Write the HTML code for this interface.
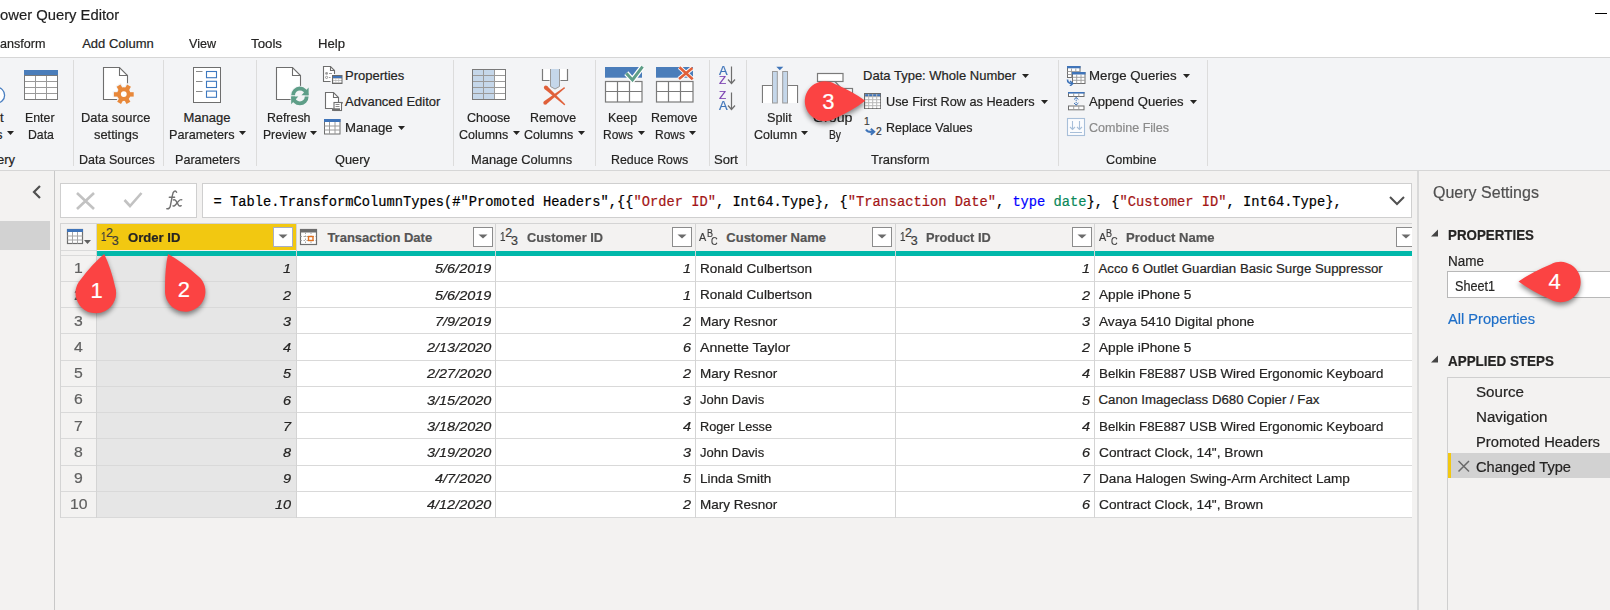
<!DOCTYPE html><html><head><meta charset="utf-8"><style>
html,body{margin:0;padding:0;width:1610px;height:610px;overflow:hidden;background:#f3f2f1;position:relative}
.t{position:absolute;white-space:pre;-webkit-text-stroke:0.2px currentColor;}
.r{position:absolute;}
</style></head><body>
<div class="r" style="left:0px;top:0px;width:1610px;height:57px;background:#ffffff;"></div>
<div class="r" style="left:0px;top:57px;width:1610px;height:1px;background:#d6d6d6;"></div>
<div class="r" style="left:0px;top:58px;width:1610px;height:112px;background:#f3f4f6;"></div>
<div class="r" style="left:0px;top:170px;width:1610px;height:1px;background:#d6d6d6;"></div>
<div class="r" style="left:0px;top:171px;width:1610px;height:439px;background:#f3f2f1;"></div>
<div class="t" style="left:-0.30px;top:7.30px;font-size:15px;line-height:15px;color:#1f1f1f;font-family:'Liberation Sans', sans-serif;transform:scaleX(0.9862);transform-origin:0 0;">ower Query Editor</div>
<div class="r" style="left:1595px;top:13px;width:12px;height:1px;background:#000;"></div>
<div class="t" style="left:0.00px;top:37.00px;font-size:13px;line-height:13px;color:#252423;font-family:'Liberation Sans', sans-serif;transform:scaleX(0.9690);transform-origin:0 0;">ansform</div>
<div class="t" style="left:82.20px;top:37.00px;font-size:13px;line-height:13px;color:#252423;font-family:'Liberation Sans', sans-serif;">Add Column</div>
<div class="t" style="left:188.60px;top:37.00px;font-size:13px;line-height:13px;color:#252423;font-family:'Liberation Sans', sans-serif;transform:scaleX(0.9663);transform-origin:0 0;">View</div>
<div class="t" style="left:250.60px;top:37.00px;font-size:13px;line-height:13px;color:#252423;font-family:'Liberation Sans', sans-serif;transform:scaleX(1.0215);transform-origin:0 0;">Tools</div>
<div class="t" style="left:317.60px;top:37.00px;font-size:13px;line-height:13px;color:#252423;font-family:'Liberation Sans', sans-serif;transform:scaleX(1.0099);transform-origin:0 0;">Help</div>
<div class="r" style="left:73px;top:60px;width:1px;height:106px;background:#dcdcdc;"></div>
<div class="r" style="left:163px;top:60px;width:1px;height:106px;background:#dcdcdc;"></div>
<div class="r" style="left:256px;top:60px;width:1px;height:106px;background:#dcdcdc;"></div>
<div class="r" style="left:453px;top:60px;width:1px;height:106px;background:#dcdcdc;"></div>
<div class="r" style="left:595px;top:60px;width:1px;height:106px;background:#dcdcdc;"></div>
<div class="r" style="left:709px;top:60px;width:1px;height:106px;background:#dcdcdc;"></div>
<div class="r" style="left:746px;top:60px;width:1px;height:106px;background:#dcdcdc;"></div>
<div class="r" style="left:1058px;top:60px;width:1px;height:106px;background:#dcdcdc;"></div>
<div class="r" style="left:1207px;top:60px;width:1px;height:106px;background:#dcdcdc;"></div>
<svg class="r" style="left:0px;top:86px;" width="8" height="18" viewBox="0 0 8 18"><circle cx="-3.3" cy="9.2" r="7.9" fill="#fff" stroke="#4a7fc1" stroke-width="1.3"/></svg>
<div class="t" style="left:-0.01px;top:111.00px;font-size:13px;line-height:13px;color:#252423;font-family:'Liberation Sans', sans-serif;">t</div>
<div class="t" style="left:-3.90px;top:128.00px;font-size:13px;line-height:13px;color:#252423;font-family:'Liberation Sans', sans-serif;">s</div>
<svg class="r" style="left:7px;top:131px;" width="7" height="4" viewBox="0 0 7 4"><path d="M0 0 H7 L3.5 4 Z" fill="#252423"/></svg>
<div class="t" style="left:-3.06px;top:153.00px;font-size:13px;line-height:13px;color:#252423;font-family:'Liberation Sans', sans-serif;">ery</div>
<svg class="r" style="left:23px;top:69px;" width="36" height="32" viewBox="0 0 36 32"><rect x="1.5" y="1.5" width="33" height="29" fill="#fff" stroke="#7a7a7a" stroke-width="1"/><rect x="1" y="1" width="34" height="5.8" fill="#4a7dba"/><path d="M12.5 6.8 V30.5 M23.5 6.8 V30.5 M1.5 12.5 H34.5 M1.5 18.5 H34.5 M1.5 24.5 H34.5" stroke="#9a9a9a" stroke-width="1"/><rect x="1.5" y="6.5" width="33" height="24" fill="none" stroke="#7a7a7a" stroke-width="1"/></svg>
<div class="t" style="left:25.20px;top:111.00px;font-size:13px;line-height:13px;color:#252423;font-family:'Liberation Sans', sans-serif;transform:scaleX(0.9495);transform-origin:0 0;">Enter</div>
<div class="t" style="left:27.60px;top:128.00px;font-size:13px;line-height:13px;color:#252423;font-family:'Liberation Sans', sans-serif;transform:scaleX(0.9432);transform-origin:0 0;">Data</div>
<svg class="r" style="left:101px;top:66px;" width="36" height="38" viewBox="0 0 36 38"><path d="M2.5 1.5 H18.5 L26.5 9.5 V33.5 H2.5 Z" fill="#fff" stroke="#6e6e6e" stroke-width="1.1"/><path d="M18.5 1.5 V9.5 H26.5" fill="none" stroke="#6e6e6e" stroke-width="1.1"/><g transform="translate(22.8 28.1)"><rect x="-3.2" y="-11.2" width="6.4" height="22.4" fill="#f3f4f6" transform="rotate(30)"/><rect x="-3.2" y="-11.2" width="6.4" height="22.4" fill="#f3f4f6" transform="rotate(90)"/><rect x="-3.2" y="-11.2" width="6.4" height="22.4" fill="#f3f4f6" transform="rotate(150)"/><circle r="7.8" fill="#f3f4f6"/></g><g transform="translate(22.8 28.1)"><rect x="-1.9" y="-9.9" width="4.4" height="19.8" fill="#e8883a" transform="rotate(30)"/><rect x="-1.9" y="-9.9" width="4.4" height="19.8" fill="#e8883a" transform="rotate(90)"/><rect x="-1.9" y="-9.9" width="4.4" height="19.8" fill="#e8883a" transform="rotate(150)"/><circle r="6.8" fill="#e8883a"/><circle r="2.9" fill="#fff"/></g></svg>
<div class="t" style="left:81.30px;top:111.00px;font-size:13px;line-height:13px;color:#252423;font-family:'Liberation Sans', sans-serif;transform:scaleX(0.9888);transform-origin:0 0;">Data source</div>
<div class="t" style="left:93.50px;top:128.00px;font-size:13px;line-height:13px;color:#252423;font-family:'Liberation Sans', sans-serif;transform:scaleX(0.9889);transform-origin:0 0;">settings</div>
<div class="t" style="left:78.70px;top:153.00px;font-size:13px;line-height:13px;color:#252423;font-family:'Liberation Sans', sans-serif;transform:scaleX(0.9624);transform-origin:0 0;">Data Sources</div>
<svg class="r" style="left:192px;top:66px;" width="31" height="38" viewBox="0 0 31 38"><rect x="1.5" y="1.5" width="27" height="35" fill="#fff" stroke="#6e6e6e" stroke-width="1"/><path d="M4 5.5 H10.5 M4 15.5 H10.5 M4 25.5 H10.5" stroke="#8a8a8a" stroke-width="1"/><rect x="14.5" y="5.5" width="10" height="6.2" fill="#fff" stroke="#3c78c0" stroke-width="1.1"/><rect x="14.5" y="15.3" width="10" height="6.2" fill="#fff" stroke="#3c78c0" stroke-width="1.1"/><rect x="14.5" y="25.1" width="10" height="6.2" fill="#fff" stroke="#3c78c0" stroke-width="1.1"/></svg>
<div class="t" style="left:183.50px;top:111.00px;font-size:13px;line-height:13px;color:#252423;font-family:'Liberation Sans', sans-serif;">Manage</div>
<div class="t" style="left:169.10px;top:128.00px;font-size:13px;line-height:13px;color:#252423;font-family:'Liberation Sans', sans-serif;transform:scaleX(0.9749);transform-origin:0 0;">Parameters</div>
<svg class="r" style="left:239px;top:131px;" width="7" height="4" viewBox="0 0 7 4"><path d="M0 0 H7 L3.5 4 Z" fill="#252423"/></svg>
<div class="t" style="left:174.60px;top:153.00px;font-size:13px;line-height:13px;color:#252423;font-family:'Liberation Sans', sans-serif;transform:scaleX(0.9675);transform-origin:0 0;">Parameters</div>
<svg class="r" style="left:274px;top:66px;" width="40" height="40" viewBox="0 0 40 40"><path d="M2.5 1.5 H18.5 L26.5 9.5 V33.5 H2.5 Z" fill="#fff" stroke="#6e6e6e" stroke-width="1.1"/><path d="M18.5 1.5 V9.5 H26.5" fill="none" stroke="#6e6e6e" stroke-width="1.1"/><circle cx="25.9" cy="29.85" r="10" fill="#f3f4f6"/><g fill="none" stroke="#5e9e88" stroke-width="3.8"><path d="M19.1 29.3 A6.8 6.8 0 0 1 32.7 29.3"/><path d="M32.7 30.5 A6.8 6.8 0 0 1 19.1 30.5"/></g><path d="M27.5 29.3 H34.6 V21.4 Z" fill="#5e9e88"/><path d="M24.3 30.5 H17.2 V38.3 Z" fill="#5e9e88"/></svg>
<div class="t" style="left:267.20px;top:111.00px;font-size:13px;line-height:13px;color:#252423;font-family:'Liberation Sans', sans-serif;transform:scaleX(0.9557);transform-origin:0 0;">Refresh</div>
<div class="t" style="left:262.50px;top:128.00px;font-size:13px;line-height:13px;color:#252423;font-family:'Liberation Sans', sans-serif;transform:scaleX(0.9344);transform-origin:0 0;">Preview</div>
<svg class="r" style="left:310px;top:131px;" width="7" height="4" viewBox="0 0 7 4"><path d="M0 0 H7 L3.5 4 Z" fill="#252423"/></svg>
<svg class="r" style="left:321px;top:64px;" width="24" height="22" viewBox="0 0 24 22"><path d="M9.5 17.5 H2.5 V2.5 H9.5 L13.5 6.5 V10" fill="#fff" stroke="#6e6e6e" stroke-width="1.1"/><path d="M9.5 2.5 V6.5 H13.5" fill="none" stroke="#6e6e6e" stroke-width="1.1"/><circle cx="5.6" cy="9.4" r="1.4" fill="#9a9a9a"/><circle cx="5.6" cy="13.4" r="1.1" fill="#fff" stroke="#8a8a8a" stroke-width="0.9"/><path d="M8 9.5 H11 M8 13.5 H9.5" stroke="#9a9a9a" stroke-width="1"/><rect x="11" y="11" width="10.5" height="9" fill="#6a6a6a"/><rect x="12" y="14" width="8.5" height="5" fill="#b8b8b8"/><rect x="12" y="12" width="8.5" height="2" fill="#3f74b9"/><rect x="12.3" y="14.8" width="2.3" height="1.3" fill="#fff"/><rect x="15.2" y="14.8" width="2.3" height="1.3" fill="#fff"/><rect x="18.1" y="14.8" width="2.3" height="1.3" fill="#fff"/><rect x="12.3" y="16.9" width="2.3" height="1.3" fill="#fff"/><rect x="15.2" y="16.9" width="2.3" height="1.3" fill="#fff"/><rect x="18.1" y="16.9" width="2.3" height="1.3" fill="#fff"/></svg>
<div class="t" style="left:345.00px;top:69.00px;font-size:13px;line-height:13px;color:#252423;font-family:'Liberation Sans', sans-serif;">Properties</div>
<svg class="r" style="left:323px;top:90px;" width="24" height="24" viewBox="0 0 24 24"><path d="M9.5 18.5 H2.5 V2.5 H10.5 L15.5 7.5 V12" fill="#fff" stroke="#6e6e6e" stroke-width="1.1"/><path d="M10.5 2.5 V7.5 H15.5" fill="none" stroke="#6e6e6e" stroke-width="1.1"/><path d="M11.2 12.8 H20" stroke="#6e6e6e" stroke-width="1.2"/><rect x="11" y="12.5" width="7.5" height="8" fill="#fff" stroke="#6e6e6e" stroke-width="1.1"/><rect x="9" y="18.3" width="8" height="2.6" fill="#6e6e6e"/><path d="M12.5 14.5 H16.5 M12.5 16.5 H16.5" stroke="#8a8a8a" stroke-width="1"/></svg>
<div class="t" style="left:345.00px;top:95.00px;font-size:13px;line-height:13px;color:#252423;font-family:'Liberation Sans', sans-serif;">Advanced Editor</div>
<svg class="r" style="left:323px;top:118px;" width="19" height="17" viewBox="0 0 19 17"><rect x="1.5" y="1.5" width="15.5" height="14.5" fill="#fff" stroke="#6e6e6e" stroke-width="1"/><rect x="1" y="1" width="16.5" height="3" fill="#3f74b9"/><path d="M6.5 4 V16 M12 4 V16 M1.5 8 H17 M1.5 12 H17" stroke="#9a9a9a" stroke-width="1"/></svg>
<div class="t" style="left:345.00px;top:121.00px;font-size:13px;line-height:13px;color:#252423;font-family:'Liberation Sans', sans-serif;transform:scaleX(1.0154);transform-origin:0 0;">Manage</div>
<svg class="r" style="left:397.5px;top:126px;" width="7" height="4" viewBox="0 0 7 4"><path d="M0 0 H7 L3.5 4 Z" fill="#252423"/></svg>
<div class="t" style="left:335.20px;top:153.00px;font-size:13px;line-height:13px;color:#252423;font-family:'Liberation Sans', sans-serif;transform:scaleX(0.9831);transform-origin:0 0;">Query</div>
<svg class="r" style="left:471px;top:68px;" width="37" height="33" viewBox="0 0 37 33"><rect x="1.5" y="1.5" width="33" height="30" fill="#fff" stroke="#7a7a7a" stroke-width="1"/><rect x="2" y="2" width="21.5" height="29" fill="#c5d7ea"/><path d="M12.5 1.5 V31.5 M23.5 1.5 V31.5 M1.5 7.5 H34.5 M1.5 13.5 H34.5 M1.5 19.5 H34.5 M1.5 25.5 H34.5" stroke="#9a9a9a" stroke-width="1"/><rect x="1.5" y="1.5" width="33" height="30" fill="none" stroke="#7a7a7a" stroke-width="1"/></svg>
<div class="t" style="left:467.30px;top:111.00px;font-size:13px;line-height:13px;color:#252423;font-family:'Liberation Sans', sans-serif;transform:scaleX(0.9664);transform-origin:0 0;">Choose</div>
<div class="t" style="left:459.40px;top:128.00px;font-size:13px;line-height:13px;color:#252423;font-family:'Liberation Sans', sans-serif;transform:scaleX(0.9611);transform-origin:0 0;">Columns</div>
<svg class="r" style="left:513px;top:131px;" width="7" height="4" viewBox="0 0 7 4"><path d="M0 0 H7 L3.5 4 Z" fill="#252423"/></svg>
<svg class="r" style="left:540px;top:67px;" width="30" height="40" viewBox="0 0 30 40"><rect x="3" y="2" width="7" height="11" fill="#fff"/><rect x="19" y="2" width="8" height="11" fill="#fff"/><path d="M2.5 2 V13.5 H9.5 M20.5 13.5 H27.5 V2" fill="none" stroke="#7a7a7a" stroke-width="1.2"/><path d="M10.5 2 V19.5 L15 22 L19.5 19.5 V2 Z" fill="#c5d7ea"/><path d="M10.5 2 V19.5 L15 22 L19.5 19.5 V2" fill="none" stroke="#9a9a9a" stroke-width="1"/><path d="M4.52 21.90 L24.03 38.12 L24.97 37.08 L7.08 19.10 Z" fill="#e0603a"/><circle cx="5.8" cy="20.5" r="1.9" fill="#e0603a"/><circle cx="24.5" cy="37.6" r="0.7" fill="#e0603a"/><path d="M23.77 20.45 L4.03 34.30 L6.37 37.30 L24.63 21.55 Z" fill="#e0603a"/><circle cx="24.2" cy="21.0" r="0.7" fill="#e0603a"/><circle cx="5.2" cy="35.8" r="1.9" fill="#e0603a"/></svg>
<div class="t" style="left:530.30px;top:111.00px;font-size:13px;line-height:13px;color:#252423;font-family:'Liberation Sans', sans-serif;transform:scaleX(0.9524);transform-origin:0 0;">Remove</div>
<div class="t" style="left:524.40px;top:128.00px;font-size:13px;line-height:13px;color:#252423;font-family:'Liberation Sans', sans-serif;transform:scaleX(0.9611);transform-origin:0 0;">Columns</div>
<svg class="r" style="left:578px;top:131px;" width="7" height="4" viewBox="0 0 7 4"><path d="M0 0 H7 L3.5 4 Z" fill="#252423"/></svg>
<div class="t" style="left:471.30px;top:153.00px;font-size:13px;line-height:13px;color:#252423;font-family:'Liberation Sans', sans-serif;transform:scaleX(0.9924);transform-origin:0 0;">Manage Columns</div>
<svg class="r" style="left:603px;top:64px;" width="42" height="40" viewBox="0 0 42 40"><rect x="2" y="3" width="37" height="10.7" fill="#4a7dba"/><rect x="2.5" y="17.5" width="36.5" height="20.5" fill="#fff" stroke="#7a7a7a" stroke-width="1.2"/><path d="M14.5 17.5 V38 M26.5 17.5 V38 M2.5 27.5 H39" stroke="#7a7a7a" stroke-width="1.2"/><path d="M23.3 9.2 L29.5 16 L39.6 2.7" fill="none" stroke="#fff" stroke-width="5.5"/><path d="M23.3 9.2 L29.5 16 L39.6 2.7" fill="none" stroke="#5e9e88" stroke-width="3"/></svg>
<div class="t" style="left:608.10px;top:111.00px;font-size:13px;line-height:13px;color:#252423;font-family:'Liberation Sans', sans-serif;transform:scaleX(0.9585);transform-origin:0 0;">Keep</div>
<div class="t" style="left:603.40px;top:128.00px;font-size:13px;line-height:13px;color:#252423;font-family:'Liberation Sans', sans-serif;transform:scaleX(0.9198);transform-origin:0 0;">Rows</div>
<svg class="r" style="left:637.5px;top:131px;" width="7" height="4" viewBox="0 0 7 4"><path d="M0 0 H7 L3.5 4 Z" fill="#252423"/></svg>
<svg class="r" style="left:654px;top:64px;" width="42" height="40" viewBox="0 0 42 40"><rect x="2" y="3" width="37" height="10.7" fill="#4a7dba"/><rect x="2.5" y="17.5" width="36.5" height="20.5" fill="#fff" stroke="#7a7a7a" stroke-width="1.2"/><path d="M14.5 17.5 V38 M26.5 17.5 V38 M2.5 27.5 H39" stroke="#7a7a7a" stroke-width="1.2"/><path d="M25.4 3.2 L38.7 15.3 M38.4 4.1 L25 15" fill="none" stroke="#fff" stroke-width="4.5"/><path d="M25.4 3.2 L38.7 15.3 M38.4 4.1 L25 15" fill="none" stroke="#e0603a" stroke-width="2.6"/></svg>
<div class="t" style="left:651.40px;top:111.00px;font-size:13px;line-height:13px;color:#252423;font-family:'Liberation Sans', sans-serif;transform:scaleX(0.9565);transform-origin:0 0;">Remove</div>
<div class="t" style="left:654.60px;top:128.00px;font-size:13px;line-height:13px;color:#252423;font-family:'Liberation Sans', sans-serif;transform:scaleX(0.9198);transform-origin:0 0;">Rows</div>
<svg class="r" style="left:688.5px;top:131px;" width="7" height="4" viewBox="0 0 7 4"><path d="M0 0 H7 L3.5 4 Z" fill="#252423"/></svg>
<div class="t" style="left:611.30px;top:153.00px;font-size:13px;line-height:13px;color:#252423;font-family:'Liberation Sans', sans-serif;transform:scaleX(0.9528);transform-origin:0 0;">Reduce Rows</div>
<svg class="r" style="left:727px;top:66px;" width="9" height="19" viewBox="0 0 9 19"><path d="M4.5 0.5 V17.5 M1 13.5 L4.5 17.5 L8 13.5" fill="none" stroke="#6e6e6e" stroke-width="1.2"/></svg>
<svg class="r" style="left:727px;top:92px;" width="9" height="19" viewBox="0 0 9 19"><path d="M4.5 0.5 V17.5 M1 13.5 L4.5 17.5 L8 13.5" fill="none" stroke="#6e6e6e" stroke-width="1.2"/></svg>
<div class="t" style="left:718.60px;top:64.91px;font-size:12.150837988826815px;line-height:12.150837988826815px;color:#3f74b9;font-family:'Liberation Sans', sans-serif;transform:scaleX(1.0611);transform-origin:0 0;">A</div>
<div class="t" style="left:719.10px;top:74.80px;font-size:10.75418994413408px;line-height:10.75418994413408px;color:#7a3fb0;font-family:'Liberation Sans', sans-serif;transform:scaleX(1.0961);transform-origin:0 0;">Z</div>
<div class="t" style="left:719.10px;top:90.83px;font-size:10.474860335195531px;line-height:10.474860335195531px;color:#7a3fb0;font-family:'Liberation Sans', sans-serif;transform:scaleX(1.1254);transform-origin:0 0;">Z</div>
<div class="t" style="left:718.60px;top:100.11px;font-size:12.150837988826815px;line-height:12.150837988826815px;color:#3f74b9;font-family:'Liberation Sans', sans-serif;transform:scaleX(1.0611);transform-origin:0 0;">A</div>
<div class="t" style="left:714.00px;top:153.00px;font-size:13px;line-height:13px;color:#252423;font-family:'Liberation Sans', sans-serif;transform:scaleX(1.0067);transform-origin:0 0;">Sort</div>
<svg class="r" style="left:760px;top:65px;" width="40" height="40" viewBox="0 0 40 40"><path d="M16.3 1.8 H23.3 L19.8 5.3 Z" fill="#3f74b9"/><path d="M2.5 38 V20.5 H12.5 M27.5 20.5 H37.5 V38" fill="#fff" stroke="#7a7a7a" stroke-width="1.2"/><rect x="3" y="21" width="9.3" height="17" fill="#fff"/><rect x="28" y="21" width="9" height="17" fill="#fff"/><rect x="12.5" y="6.5" width="4.8" height="31.5" fill="#c5d7ea" stroke="#9a9a9a" stroke-width="1"/><rect x="22.7" y="6.5" width="4.8" height="31.5" fill="#c5d7ea" stroke="#9a9a9a" stroke-width="1"/></svg>
<div class="t" style="left:767.20px;top:111.00px;font-size:13px;line-height:13px;color:#252423;font-family:'Liberation Sans', sans-serif;transform:scaleX(0.9767);transform-origin:0 0;">Split</div>
<div class="t" style="left:753.50px;top:128.00px;font-size:13px;line-height:13px;color:#252423;font-family:'Liberation Sans', sans-serif;transform:scaleX(0.9622);transform-origin:0 0;">Column</div>
<svg class="r" style="left:801px;top:131px;" width="7" height="4" viewBox="0 0 7 4"><path d="M0 0 H7 L3.5 4 Z" fill="#252423"/></svg>
<svg class="r" style="left:815px;top:71px;" width="40" height="30" viewBox="0 0 40 30"><rect x="2.5" y="2.5" width="25.5" height="8" fill="#fff" stroke="#7a7a7a" stroke-width="1.2"/><path d="M20 10.5 L26 17" stroke="#7a7a7a" stroke-width="1.2"/><rect x="24.5" y="17.5" width="13" height="8" fill="#fff" stroke="#7a7a7a" stroke-width="1.2"/></svg>
<div class="t" style="left:812.50px;top:111.00px;font-size:13px;line-height:13px;color:#252423;font-family:'Liberation Sans', sans-serif;transform:scaleX(1.0933);transform-origin:0 0;">Group</div>
<div class="t" style="left:829.00px;top:128.00px;font-size:13px;line-height:13px;color:#252423;font-family:'Liberation Sans', sans-serif;transform:scaleX(0.7910);transform-origin:0 0;">By</div>
<div class="t" style="left:863.10px;top:69.00px;font-size:13px;line-height:13px;color:#252423;font-family:'Liberation Sans', sans-serif;">Data Type: Whole Number</div>
<svg class="r" style="left:1021.5px;top:74px;" width="7" height="4" viewBox="0 0 7 4"><path d="M0 0 H7 L3.5 4 Z" fill="#252423"/></svg>
<svg class="r" style="left:863px;top:92px;" width="19" height="18" viewBox="0 0 19 18"><rect x="1" y="1" width="17" height="16" fill="#6a6a6a"/><rect x="2" y="2" width="15" height="14" fill="#b8b8b8"/><rect x="2.2" y="2.2" width="3" height="2" fill="#3f74b9"/><rect x="6.2" y="2.2" width="3" height="2" fill="#3f74b9"/><rect x="10.2" y="2.2" width="3" height="2" fill="#3f74b9"/><rect x="14.2" y="2.2" width="3" height="2" fill="#3f74b9"/><rect x="2.2" y="5.2" width="3" height="2" fill="#ffffff"/><rect x="6.2" y="5.2" width="3" height="2" fill="#ffffff"/><rect x="10.2" y="5.2" width="3" height="2" fill="#ffffff"/><rect x="14.2" y="5.2" width="3" height="2" fill="#ffffff"/><rect x="2.2" y="8.2" width="3" height="2" fill="#ffffff"/><rect x="6.2" y="8.2" width="3" height="2" fill="#ffffff"/><rect x="10.2" y="8.2" width="3" height="2" fill="#ffffff"/><rect x="14.2" y="8.2" width="3" height="2" fill="#ffffff"/><rect x="2.2" y="11.2" width="3" height="2" fill="#ffffff"/><rect x="6.2" y="11.2" width="3" height="2" fill="#ffffff"/><rect x="10.2" y="11.2" width="3" height="2" fill="#ffffff"/><rect x="14.2" y="11.2" width="3" height="2" fill="#ffffff"/><rect x="2.2" y="14.2" width="3" height="2" fill="#ffffff"/><rect x="6.2" y="14.2" width="3" height="2" fill="#ffffff"/><rect x="10.2" y="14.2" width="3" height="2" fill="#ffffff"/><rect x="14.2" y="14.2" width="3" height="2" fill="#ffffff"/></svg>
<div class="t" style="left:886.10px;top:95.00px;font-size:13px;line-height:13px;color:#252423;font-family:'Liberation Sans', sans-serif;transform:scaleX(0.9789);transform-origin:0 0;">Use First Row as Headers</div>
<svg class="r" style="left:1040.5px;top:100px;" width="7" height="4" viewBox="0 0 7 4"><path d="M0 0 H7 L3.5 4 Z" fill="#252423"/></svg>
<div class="t" style="left:864.00px;top:116.98px;font-size:10.3px;line-height:10.3px;color:#3c3c3c;font-family:'Liberation Sans', sans-serif;">1</div>
<div class="t" style="left:876.00px;top:126.98px;font-size:10.3px;line-height:10.3px;color:#3c3c3c;font-family:'Liberation Sans', sans-serif;">2</div>
<svg class="r" style="left:864px;top:124px;" width="14" height="14" viewBox="0 0 14 14"><path d="M2 5.5 Q3.5 8.3 8 7.8 H9" fill="none" stroke="#3f74b9" stroke-width="2"/><path d="M6.8 4.8 L10.2 7.8 L6.8 10.8" fill="none" stroke="#3f74b9" stroke-width="2"/></svg>
<div class="t" style="left:886.10px;top:121.00px;font-size:13px;line-height:13px;color:#252423;font-family:'Liberation Sans', sans-serif;transform:scaleX(0.9602);transform-origin:0 0;">Replace Values</div>
<div class="t" style="left:871.20px;top:153.00px;font-size:13px;line-height:13px;color:#252423;font-family:'Liberation Sans', sans-serif;transform:scaleX(0.9941);transform-origin:0 0;">Transform</div>
<svg class="r" style="left:1065px;top:64px;" width="22" height="22" viewBox="0 0 22 22"><rect x="2.5" y="2.5" width="12.5" height="11" fill="#fff" stroke="#6e6e6e" stroke-width="1"/><rect x="2" y="2" width="13.5" height="2.3" fill="#3f74b9"/><path d="M6.5 4.5 V13.5 M10.8 4.5 V13.5 M2.5 7.5 H15 M2.5 10.5 H15" stroke="#9a9a9a" stroke-width="0.9"/><rect x="7.5" y="8.5" width="12.5" height="11" fill="#fff" stroke="#6e6e6e" stroke-width="1"/><rect x="7" y="8" width="13.5" height="2.5" fill="#3f74b9"/><path d="M11.7 10.5 V19.5 M16 10.5 V19.5 M7.5 13.3 H20 M7.5 16.3 H20" stroke="#9a9a9a" stroke-width="0.9"/><path d="M2.5 15.5 Q2.5 19.5 7 19.5" fill="none" stroke="#3f74b9" stroke-width="1.6"/><path d="M5 17 L7.8 19.5 L5 22" fill="none" stroke="#3f74b9" stroke-width="1.5"/></svg>
<div class="t" style="left:1089.40px;top:69.00px;font-size:13px;line-height:13px;color:#252423;font-family:'Liberation Sans', sans-serif;transform:scaleX(1.0189);transform-origin:0 0;">Merge Queries</div>
<svg class="r" style="left:1182.5px;top:74px;" width="7" height="4" viewBox="0 0 7 4"><path d="M0 0 H7 L3.5 4 Z" fill="#252423"/></svg>
<svg class="r" style="left:1066px;top:90px;" width="20" height="22" viewBox="0 0 20 22"><rect x="2.5" y="2.5" width="15.5" height="4" fill="#fff" stroke="#6e6e6e" stroke-width="1"/><rect x="2" y="2" width="16.5" height="1.6" fill="#3f74b9"/><path d="M7.7 3 V6.5 M12.8 3 V6.5" stroke="#9a9a9a" stroke-width="0.9"/><rect x="2.5" y="16" width="15.5" height="3.8" fill="#fff" stroke="#6e6e6e" stroke-width="1"/><path d="M7.7 16 V19.8 M12.8 16 V19.8" stroke="#9a9a9a" stroke-width="0.9"/><path d="M10.2 7.5 V15" stroke="#3f74b9" stroke-width="1" stroke-dasharray="1.2 1"/><path d="M8 9.5 L10.2 7.5 L12.4 9.5 M8 13 L10.2 15 L12.4 13" fill="none" stroke="#3f74b9" stroke-width="1"/></svg>
<div class="t" style="left:1089.40px;top:95.00px;font-size:13px;line-height:13px;color:#252423;font-family:'Liberation Sans', sans-serif;transform:scaleX(1.0059);transform-origin:0 0;">Append Queries</div>
<svg class="r" style="left:1189.5px;top:100px;" width="7" height="4" viewBox="0 0 7 4"><path d="M0 0 H7 L3.5 4 Z" fill="#252423"/></svg>
<svg class="r" style="left:1066px;top:117px;" width="20" height="20" viewBox="0 0 20 20"><rect x="1.5" y="1.5" width="17" height="17" fill="#fbfcfe" stroke="#a8bfd9" stroke-width="1.1"/><path d="M6.5 4 V12.5 M4 10 L6.5 12.5 L9 10 M13.5 4 V12.5 M11 10 L13.5 12.5 L16 10 M4 15.5 H16" fill="none" stroke="#a8bfd9" stroke-width="1.1"/></svg>
<div class="t" style="left:1089.40px;top:121.00px;font-size:13px;line-height:13px;color:#8a8a8a;font-family:'Liberation Sans', sans-serif;transform:scaleX(0.9641);transform-origin:0 0;">Combine Files</div>
<div class="t" style="left:1105.70px;top:153.00px;font-size:13px;line-height:13px;color:#252423;font-family:'Liberation Sans', sans-serif;transform:scaleX(0.9727);transform-origin:0 0;">Combine</div>
<div class="r" style="left:54px;top:171px;width:1px;height:439px;background:#c8c8c8;"></div>
<div class="r" style="left:0px;top:221px;width:50px;height:29px;background:#d2d2d2;"></div>
<svg class="r" style="left:30px;top:184px;" width="14" height="16" viewBox="0 0 14 16"><path d="M10 2 L4 8 L10 14" fill="none" stroke="#505050" stroke-width="2.2"/></svg>
<div class="r" style="left:1417px;top:171px;width:2px;height:439px;background:#d9d9d9;"></div>
<div class="r" style="left:60px;top:183px;width:137px;height:35px;background:#ffffff;box-sizing:border-box;border:1px solid #cfcfcf;"></div>
<div class="r" style="left:202px;top:183px;width:1210px;height:35px;background:#ffffff;box-sizing:border-box;border:1px solid #cfcfcf;"></div>
<svg class="r" style="left:74px;top:190px;" width="24" height="22" viewBox="0 0 24 22"><path d="M3 3 L20 19 M20 3 L3 19" stroke="#c2c2c2" stroke-width="2.6" fill="none"/></svg>
<svg class="r" style="left:122px;top:190px;" width="22" height="20" viewBox="0 0 22 20"><path d="M2.5 10 L8 16 L19.5 3" stroke="#c2c2c2" stroke-width="2.6" fill="none"/></svg>
<svg class="r" style="left:160px;top:186px;" width="24" height="26" viewBox="0 0 24 26"><g fill="none" stroke="#707070" stroke-width="1.4" stroke-linecap="round"><path d="M16.6 6.3 Q15.8 4.6 14.2 5.3 Q12.9 6.1 12.4 9.3 L10.3 20.2 Q9.4 23.3 6.8 22.7"/><path d="M9.3 11.2 H14.6"/><g transform="translate(1 0.3)"><path d="M12.4 13.6 Q14 12.9 15 14.6 L17.5 18.9 Q18.5 20.4 20.2 19.4"/><path d="M20.8 13.5 Q19.2 12.9 17.6 14.8 L14.6 18.4 Q13.1 20.2 12 19.6"/></g></g></svg>
<div class="t" style="left:213.60px;top:196.48px;font-size:13.72px;line-height:13.72px;color:#000000;font-family:'Liberation Mono', monospace;">= Table.TransformColumnTypes(#"Promoted Headers",{{</div>
<div class="t" style="left:633.58px;top:196.48px;font-size:13.72px;line-height:13.72px;color:#a31515;font-family:'Liberation Mono', monospace;">"Order ID"</div>
<div class="t" style="left:715.93px;top:196.48px;font-size:13.72px;line-height:13.72px;color:#000000;font-family:'Liberation Mono', monospace;">, Int64.Type}, {</div>
<div class="t" style="left:847.69px;top:196.48px;font-size:13.72px;line-height:13.72px;color:#a31515;font-family:'Liberation Mono', monospace;">"Transaction Date"</div>
<div class="t" style="left:995.92px;top:196.48px;font-size:13.72px;line-height:13.72px;color:#000000;font-family:'Liberation Mono', monospace;">, </div>
<div class="t" style="left:1012.39px;top:196.48px;font-size:13.72px;line-height:13.72px;color:#0000ff;font-family:'Liberation Mono', monospace;">type</div>
<div class="t" style="left:1045.34px;top:196.48px;font-size:13.72px;line-height:13.72px;color:#000;font-family:'Liberation Mono', monospace;"> </div>
<div class="t" style="left:1053.57px;top:196.48px;font-size:13.72px;line-height:13.72px;color:#09885a;font-family:'Liberation Mono', monospace;">date</div>
<div class="t" style="left:1086.51px;top:196.48px;font-size:13.72px;line-height:13.72px;color:#000000;font-family:'Liberation Mono', monospace;">}, {</div>
<div class="t" style="left:1119.45px;top:196.48px;font-size:13.72px;line-height:13.72px;color:#a31515;font-family:'Liberation Mono', monospace;">"Customer ID"</div>
<div class="t" style="left:1226.51px;top:196.48px;font-size:13.72px;line-height:13.72px;color:#000000;font-family:'Liberation Mono', monospace;">, Int64.Type},</div>
<svg class="r" style="left:1388px;top:193px;" width="18" height="14" viewBox="0 0 18 14"><path d="M2 4 L9 11 L16 4" fill="none" stroke="#505050" stroke-width="2"/></svg>
<div class="r" style="left:60px;top:223px;width:1352px;height:28px;background:#f3f2f1;"></div>
<div class="r" style="left:60px;top:223px;width:1352px;height:1px;background:#d4d4d4;"></div>
<div class="r" style="left:60px;top:223px;width:1px;height:295px;background:#d4d4d4;"></div>
<div class="r" style="left:97px;top:224px;width:199px;height:26px;background:#f2c811;"></div>
<div class="r" style="left:97px;top:251px;width:1315px;height:5px;background:#01b8aa;"></div>
<div class="r" style="left:61px;top:250px;width:35px;height:1px;background:#dadada;"></div>
<div class="r" style="left:61px;top:256px;width:35px;height:262px;background:#f3f2f1;"></div>
<div class="r" style="left:97px;top:256px;width:199px;height:262px;background:#e6e6e6;"></div>
<div class="r" style="left:297px;top:256px;width:1115px;height:262px;background:#ffffff;"></div>
<div class="r" style="left:61px;top:281px;width:1351px;height:1px;background:#d9d9d9;"></div>
<div class="r" style="left:61px;top:307px;width:1351px;height:1px;background:#d9d9d9;"></div>
<div class="r" style="left:61px;top:333px;width:1351px;height:1px;background:#d9d9d9;"></div>
<div class="r" style="left:61px;top:360px;width:1351px;height:1px;background:#d9d9d9;"></div>
<div class="r" style="left:61px;top:386px;width:1351px;height:1px;background:#d9d9d9;"></div>
<div class="r" style="left:61px;top:412px;width:1351px;height:1px;background:#d9d9d9;"></div>
<div class="r" style="left:61px;top:438px;width:1351px;height:1px;background:#d9d9d9;"></div>
<div class="r" style="left:61px;top:465px;width:1351px;height:1px;background:#d9d9d9;"></div>
<div class="r" style="left:61px;top:491px;width:1351px;height:1px;background:#d9d9d9;"></div>
<div class="r" style="left:61px;top:517px;width:1351px;height:1px;background:#d9d9d9;"></div>
<div class="r" style="left:61px;top:255px;width:35px;height:1px;background:#dadada;"></div>
<div class="r" style="left:96px;top:223px;width:1px;height:295px;background:#d4d4d4;"></div>
<div class="r" style="left:296px;top:224px;width:1px;height:294px;background:#d4d4d4;"></div>
<div class="r" style="left:495px;top:224px;width:1px;height:294px;background:#d4d4d4;"></div>
<div class="r" style="left:695px;top:224px;width:1px;height:294px;background:#d4d4d4;"></div>
<div class="r" style="left:895px;top:224px;width:1px;height:294px;background:#d4d4d4;"></div>
<div class="r" style="left:1094px;top:224px;width:1px;height:294px;background:#d4d4d4;"></div>
<svg class="r" style="left:66px;top:228px;" width="26" height="18" viewBox="0 0 26 18"><rect x="1.5" y="1.5" width="15" height="14" fill="#fff" stroke="#6e6e6e" stroke-width="1.2"/><rect x="1" y="1" width="16" height="3" fill="#3f74b9"/><path d="M6.5 4 V15.5 M11.5 4 V15.5 M1.5 8 H16.5 M1.5 12 H16.5" stroke="#a6a6a6" stroke-width="1"/><path d="M18 12 H25 L21.5 16 Z" fill="#606060"/></svg>
<div class="t" style="left:100.80px;top:231.42px;font-size:12.5px;line-height:12.5px;color:#3d3d3d;font-family:'Liberation Sans', sans-serif;transform:scaleX(0.7912);transform-origin:0 0;">1</div>
<div class="t" style="left:106.10px;top:227.22px;font-size:12.5px;line-height:12.5px;color:#3d3d3d;font-family:'Liberation Sans', sans-serif;">2</div>
<div class="t" style="left:111.80px;top:234.62px;font-size:12.5px;line-height:12.5px;color:#3d3d3d;font-family:'Liberation Sans', sans-serif;">3</div>
<div class="t" style="left:500.00px;top:231.42px;font-size:12.5px;line-height:12.5px;color:#3d3d3d;font-family:'Liberation Sans', sans-serif;transform:scaleX(0.7912);transform-origin:0 0;">1</div>
<div class="t" style="left:505.30px;top:227.22px;font-size:12.5px;line-height:12.5px;color:#3d3d3d;font-family:'Liberation Sans', sans-serif;">2</div>
<div class="t" style="left:511.00px;top:234.62px;font-size:12.5px;line-height:12.5px;color:#3d3d3d;font-family:'Liberation Sans', sans-serif;">3</div>
<div class="t" style="left:899.70px;top:231.42px;font-size:12.5px;line-height:12.5px;color:#3d3d3d;font-family:'Liberation Sans', sans-serif;transform:scaleX(0.7912);transform-origin:0 0;">1</div>
<div class="t" style="left:905.00px;top:227.22px;font-size:12.5px;line-height:12.5px;color:#3d3d3d;font-family:'Liberation Sans', sans-serif;">2</div>
<div class="t" style="left:910.70px;top:234.62px;font-size:12.5px;line-height:12.5px;color:#3d3d3d;font-family:'Liberation Sans', sans-serif;">3</div>
<div class="t" style="left:699.00px;top:231.72px;font-size:11.2px;line-height:11.2px;color:#3d3d3d;font-family:'Liberation Sans', sans-serif;transform:scaleX(0.9638);transform-origin:0 0;">A</div>
<div class="t" style="left:706.60px;top:227.59px;font-size:11px;line-height:11px;color:#3d3d3d;font-family:'Liberation Sans', sans-serif;transform:scaleX(0.8177);transform-origin:0 0;">B</div>
<div class="t" style="left:710.90px;top:235.69px;font-size:11px;line-height:11px;color:#3d3d3d;font-family:'Liberation Sans', sans-serif;transform:scaleX(0.8308);transform-origin:0 0;">C</div>
<div class="t" style="left:1098.60px;top:231.72px;font-size:11.2px;line-height:11.2px;color:#3d3d3d;font-family:'Liberation Sans', sans-serif;transform:scaleX(0.9638);transform-origin:0 0;">A</div>
<div class="t" style="left:1106.20px;top:227.59px;font-size:11px;line-height:11px;color:#3d3d3d;font-family:'Liberation Sans', sans-serif;transform:scaleX(0.8177);transform-origin:0 0;">B</div>
<div class="t" style="left:1110.50px;top:235.69px;font-size:11px;line-height:11px;color:#3d3d3d;font-family:'Liberation Sans', sans-serif;transform:scaleX(0.8308);transform-origin:0 0;">C</div>
<svg class="r" style="left:299px;top:228px;" width="20" height="18" viewBox="0 0 20 18"><rect x="1.5" y="1.5" width="16" height="15" fill="#fff" stroke="#6e6e6e" stroke-width="1.2"/><rect x="1" y="1" width="17" height="3.5" fill="#6e6e6e"/><path d="M6.5 4.5 V16 M12 4.5 V16 M1.5 8.5 H17 M1.5 12.5 H17" stroke="#a6a6a6" stroke-width="1" stroke-dasharray="1.5 1.5"/><rect x="9.5" y="8.5" width="4.5" height="4" fill="#fff" stroke="#e07020" stroke-width="1.4"/></svg>
<div class="r" style="left:273px;top:227px;width:20px;height:20px;background:#ffffff;box-sizing:border-box;border:1px solid #a8aec4;"></div>
<svg class="r" style="left:278px;top:234px;" width="10" height="5" viewBox="0 0 10 5"><path d="M0.5 0.5 H9.5 L5 4.5 Z" fill="#6b6b6b"/></svg>
<div class="r" style="left:473px;top:227px;width:20px;height:20px;background:#ffffff;box-sizing:border-box;border:1px solid #8c8c8c;"></div>
<svg class="r" style="left:478px;top:234px;" width="10" height="5" viewBox="0 0 10 5"><path d="M0.5 0.5 H9.5 L5 4.5 Z" fill="#6b6b6b"/></svg>
<div class="r" style="left:672px;top:227px;width:20px;height:20px;background:#ffffff;box-sizing:border-box;border:1px solid #8c8c8c;"></div>
<svg class="r" style="left:677px;top:234px;" width="10" height="5" viewBox="0 0 10 5"><path d="M0.5 0.5 H9.5 L5 4.5 Z" fill="#6b6b6b"/></svg>
<div class="r" style="left:872px;top:227px;width:20px;height:20px;background:#ffffff;box-sizing:border-box;border:1px solid #8c8c8c;"></div>
<svg class="r" style="left:877px;top:234px;" width="10" height="5" viewBox="0 0 10 5"><path d="M0.5 0.5 H9.5 L5 4.5 Z" fill="#6b6b6b"/></svg>
<div class="r" style="left:1072px;top:227px;width:20px;height:20px;background:#ffffff;box-sizing:border-box;border:1px solid #8c8c8c;"></div>
<svg class="r" style="left:1077px;top:234px;" width="10" height="5" viewBox="0 0 10 5"><path d="M0.5 0.5 H9.5 L5 4.5 Z" fill="#6b6b6b"/></svg>
<div class="r" style="left:1396px;top:227px;width:16px;height:20px;background:#ffffff;box-sizing:border-box;border:1px solid #8c8c8c;border-right:none;"></div>
<svg class="r" style="left:1401px;top:234px;" width="10" height="5" viewBox="0 0 10 5"><path d="M0.5 0.5 H9.5 L5 4.5 Z" fill="#6b6b6b"/></svg>
<div class="t" style="left:127.70px;top:231.00px;font-size:13px;line-height:13px;color:#252423;font-family:'Liberation Sans', sans-serif;font-weight:700;transform:scaleX(1.0075);transform-origin:0 0;">Order ID</div>
<div class="t" style="left:327.40px;top:231.00px;font-size:13px;line-height:13px;color:#555555;font-family:'Liberation Sans', sans-serif;font-weight:700;">Transaction Date</div>
<div class="t" style="left:526.90px;top:231.00px;font-size:13px;line-height:13px;color:#555555;font-family:'Liberation Sans', sans-serif;font-weight:700;transform:scaleX(0.9833);transform-origin:0 0;">Customer ID</div>
<div class="t" style="left:726.30px;top:231.00px;font-size:13px;line-height:13px;color:#555555;font-family:'Liberation Sans', sans-serif;font-weight:700;">Customer Name</div>
<div class="t" style="left:926.00px;top:231.00px;font-size:13px;line-height:13px;color:#555555;font-family:'Liberation Sans', sans-serif;font-weight:700;transform:scaleX(0.9845);transform-origin:0 0;">Product ID</div>
<div class="t" style="left:1126.00px;top:231.00px;font-size:13px;line-height:13px;color:#555555;font-family:'Liberation Sans', sans-serif;font-weight:700;transform:scaleX(1.0054);transform-origin:0 0;">Product Name</div>
<div class="t" style="left:73.91px;top:261.34px;font-size:14.6px;line-height:14.6px;color:#606060;font-family:'Liberation Sans', sans-serif;transform:scaleX(1.0808);transform-origin:0 0;">1</div>
<div class="t" style="left:283.25px;top:262.40px;font-size:13px;line-height:13px;color:#252423;font-family:'Liberation Sans', sans-serif;font-style:italic;transform:scaleX(1.1138);transform-origin:0 0;">1</div>
<div class="t" style="left:434.85px;top:262.40px;font-size:13px;line-height:13px;color:#252423;font-family:'Liberation Sans', sans-serif;font-style:italic;transform:scaleX(1.1136);transform-origin:0 0;">5/6/2019</div>
<div class="t" style="left:682.55px;top:262.40px;font-size:13px;line-height:13px;color:#252423;font-family:'Liberation Sans', sans-serif;font-style:italic;transform:scaleX(1.1138);transform-origin:0 0;">1</div>
<div class="t" style="left:699.80px;top:262.23px;font-size:13.2px;line-height:13.2px;color:#252423;font-family:'Liberation Sans', sans-serif;transform:scaleX(1.0254);transform-origin:0 0;">Ronald Culbertson</div>
<div class="t" style="left:1082.45px;top:262.40px;font-size:13px;line-height:13px;color:#252423;font-family:'Liberation Sans', sans-serif;font-style:italic;transform:scaleX(1.1138);transform-origin:0 0;">1</div>
<div class="t" style="left:1098.50px;top:262.18px;font-size:13.25px;line-height:13.25px;color:#252423;font-family:'Liberation Sans', sans-serif;">Acco 6 Outlet Guardian Basic Surge Suppressor</div>
<div class="t" style="left:73.91px;top:287.56px;font-size:14.6px;line-height:14.6px;color:#606060;font-family:'Liberation Sans', sans-serif;transform:scaleX(1.0808);transform-origin:0 0;">2</div>
<div class="t" style="left:283.25px;top:288.62px;font-size:13px;line-height:13px;color:#252423;font-family:'Liberation Sans', sans-serif;font-style:italic;transform:scaleX(1.1138);transform-origin:0 0;">2</div>
<div class="t" style="left:434.85px;top:288.62px;font-size:13px;line-height:13px;color:#252423;font-family:'Liberation Sans', sans-serif;font-style:italic;transform:scaleX(1.1136);transform-origin:0 0;">5/6/2019</div>
<div class="t" style="left:682.55px;top:288.62px;font-size:13px;line-height:13px;color:#252423;font-family:'Liberation Sans', sans-serif;font-style:italic;transform:scaleX(1.1138);transform-origin:0 0;">1</div>
<div class="t" style="left:699.80px;top:288.45px;font-size:13.2px;line-height:13.2px;color:#252423;font-family:'Liberation Sans', sans-serif;transform:scaleX(1.0254);transform-origin:0 0;">Ronald Culbertson</div>
<div class="t" style="left:1082.45px;top:288.62px;font-size:13px;line-height:13px;color:#252423;font-family:'Liberation Sans', sans-serif;font-style:italic;transform:scaleX(1.1138);transform-origin:0 0;">2</div>
<div class="t" style="left:1098.50px;top:288.40px;font-size:13.25px;line-height:13.25px;color:#252423;font-family:'Liberation Sans', sans-serif;transform:scaleX(1.0281);transform-origin:0 0;">Apple iPhone 5</div>
<div class="t" style="left:73.91px;top:313.78px;font-size:14.6px;line-height:14.6px;color:#606060;font-family:'Liberation Sans', sans-serif;transform:scaleX(1.0808);transform-origin:0 0;">3</div>
<div class="t" style="left:283.25px;top:314.84px;font-size:13px;line-height:13px;color:#252423;font-family:'Liberation Sans', sans-serif;font-style:italic;transform:scaleX(1.1138);transform-origin:0 0;">3</div>
<div class="t" style="left:434.85px;top:314.84px;font-size:13px;line-height:13px;color:#252423;font-family:'Liberation Sans', sans-serif;font-style:italic;transform:scaleX(1.1136);transform-origin:0 0;">7/9/2019</div>
<div class="t" style="left:682.55px;top:314.84px;font-size:13px;line-height:13px;color:#252423;font-family:'Liberation Sans', sans-serif;font-style:italic;transform:scaleX(1.1138);transform-origin:0 0;">2</div>
<div class="t" style="left:699.80px;top:314.67px;font-size:13.2px;line-height:13.2px;color:#252423;font-family:'Liberation Sans', sans-serif;transform:scaleX(1.0232);transform-origin:0 0;">Mary Resnor</div>
<div class="t" style="left:1082.45px;top:314.84px;font-size:13px;line-height:13px;color:#252423;font-family:'Liberation Sans', sans-serif;font-style:italic;transform:scaleX(1.1138);transform-origin:0 0;">3</div>
<div class="t" style="left:1098.50px;top:314.62px;font-size:13.25px;line-height:13.25px;color:#252423;font-family:'Liberation Sans', sans-serif;transform:scaleX(1.0308);transform-origin:0 0;">Avaya 5410 Digital phone</div>
<div class="t" style="left:73.91px;top:340.00px;font-size:14.6px;line-height:14.6px;color:#606060;font-family:'Liberation Sans', sans-serif;transform:scaleX(1.0808);transform-origin:0 0;">4</div>
<div class="t" style="left:283.25px;top:341.06px;font-size:13px;line-height:13px;color:#252423;font-family:'Liberation Sans', sans-serif;font-style:italic;transform:scaleX(1.1138);transform-origin:0 0;">4</div>
<div class="t" style="left:426.80px;top:341.06px;font-size:13px;line-height:13px;color:#252423;font-family:'Liberation Sans', sans-serif;font-style:italic;transform:scaleX(1.1136);transform-origin:0 0;">2/13/2020</div>
<div class="t" style="left:682.55px;top:341.06px;font-size:13px;line-height:13px;color:#252423;font-family:'Liberation Sans', sans-serif;font-style:italic;transform:scaleX(1.1138);transform-origin:0 0;">6</div>
<div class="t" style="left:699.80px;top:340.89px;font-size:13.2px;line-height:13.2px;color:#252423;font-family:'Liberation Sans', sans-serif;transform:scaleX(1.0744);transform-origin:0 0;">Annette Taylor</div>
<div class="t" style="left:1082.45px;top:341.06px;font-size:13px;line-height:13px;color:#252423;font-family:'Liberation Sans', sans-serif;font-style:italic;transform:scaleX(1.1138);transform-origin:0 0;">2</div>
<div class="t" style="left:1098.50px;top:340.84px;font-size:13.25px;line-height:13.25px;color:#252423;font-family:'Liberation Sans', sans-serif;transform:scaleX(1.0281);transform-origin:0 0;">Apple iPhone 5</div>
<div class="t" style="left:73.91px;top:366.22px;font-size:14.6px;line-height:14.6px;color:#606060;font-family:'Liberation Sans', sans-serif;transform:scaleX(1.0808);transform-origin:0 0;">5</div>
<div class="t" style="left:283.25px;top:367.28px;font-size:13px;line-height:13px;color:#252423;font-family:'Liberation Sans', sans-serif;font-style:italic;transform:scaleX(1.1138);transform-origin:0 0;">5</div>
<div class="t" style="left:426.80px;top:367.28px;font-size:13px;line-height:13px;color:#252423;font-family:'Liberation Sans', sans-serif;font-style:italic;transform:scaleX(1.1136);transform-origin:0 0;">2/27/2020</div>
<div class="t" style="left:682.55px;top:367.28px;font-size:13px;line-height:13px;color:#252423;font-family:'Liberation Sans', sans-serif;font-style:italic;transform:scaleX(1.1138);transform-origin:0 0;">2</div>
<div class="t" style="left:699.80px;top:367.11px;font-size:13.2px;line-height:13.2px;color:#252423;font-family:'Liberation Sans', sans-serif;transform:scaleX(1.0232);transform-origin:0 0;">Mary Resnor</div>
<div class="t" style="left:1082.45px;top:367.28px;font-size:13px;line-height:13px;color:#252423;font-family:'Liberation Sans', sans-serif;font-style:italic;transform:scaleX(1.1138);transform-origin:0 0;">4</div>
<div class="t" style="left:1098.50px;top:367.06px;font-size:13.25px;line-height:13.25px;color:#252423;font-family:'Liberation Sans', sans-serif;transform:scaleX(1.0057);transform-origin:0 0;">Belkin F8E887 USB Wired Ergonomic Keyboard</div>
<div class="t" style="left:73.91px;top:392.44px;font-size:14.6px;line-height:14.6px;color:#606060;font-family:'Liberation Sans', sans-serif;transform:scaleX(1.0808);transform-origin:0 0;">6</div>
<div class="t" style="left:283.25px;top:393.50px;font-size:13px;line-height:13px;color:#252423;font-family:'Liberation Sans', sans-serif;font-style:italic;transform:scaleX(1.1138);transform-origin:0 0;">6</div>
<div class="t" style="left:426.80px;top:393.50px;font-size:13px;line-height:13px;color:#252423;font-family:'Liberation Sans', sans-serif;font-style:italic;transform:scaleX(1.1136);transform-origin:0 0;">3/15/2020</div>
<div class="t" style="left:682.55px;top:393.50px;font-size:13px;line-height:13px;color:#252423;font-family:'Liberation Sans', sans-serif;font-style:italic;transform:scaleX(1.1138);transform-origin:0 0;">3</div>
<div class="t" style="left:699.80px;top:393.33px;font-size:13.2px;line-height:13.2px;color:#252423;font-family:'Liberation Sans', sans-serif;transform:scaleX(0.9848);transform-origin:0 0;">John Davis</div>
<div class="t" style="left:1082.45px;top:393.50px;font-size:13px;line-height:13px;color:#252423;font-family:'Liberation Sans', sans-serif;font-style:italic;transform:scaleX(1.1138);transform-origin:0 0;">5</div>
<div class="t" style="left:1098.50px;top:393.28px;font-size:13.25px;line-height:13.25px;color:#252423;font-family:'Liberation Sans', sans-serif;">Canon Imageclass D680 Copier / Fax</div>
<div class="t" style="left:73.91px;top:418.66px;font-size:14.6px;line-height:14.6px;color:#606060;font-family:'Liberation Sans', sans-serif;transform:scaleX(1.0808);transform-origin:0 0;">7</div>
<div class="t" style="left:283.25px;top:419.72px;font-size:13px;line-height:13px;color:#252423;font-family:'Liberation Sans', sans-serif;font-style:italic;transform:scaleX(1.1138);transform-origin:0 0;">7</div>
<div class="t" style="left:426.80px;top:419.72px;font-size:13px;line-height:13px;color:#252423;font-family:'Liberation Sans', sans-serif;font-style:italic;transform:scaleX(1.1136);transform-origin:0 0;">3/18/2020</div>
<div class="t" style="left:682.55px;top:419.72px;font-size:13px;line-height:13px;color:#252423;font-family:'Liberation Sans', sans-serif;font-style:italic;transform:scaleX(1.1138);transform-origin:0 0;">4</div>
<div class="t" style="left:699.80px;top:419.55px;font-size:13.2px;line-height:13.2px;color:#252423;font-family:'Liberation Sans', sans-serif;transform:scaleX(0.9634);transform-origin:0 0;">Roger Lesse</div>
<div class="t" style="left:1082.45px;top:419.72px;font-size:13px;line-height:13px;color:#252423;font-family:'Liberation Sans', sans-serif;font-style:italic;transform:scaleX(1.1138);transform-origin:0 0;">4</div>
<div class="t" style="left:1098.50px;top:419.50px;font-size:13.25px;line-height:13.25px;color:#252423;font-family:'Liberation Sans', sans-serif;transform:scaleX(1.0057);transform-origin:0 0;">Belkin F8E887 USB Wired Ergonomic Keyboard</div>
<div class="t" style="left:73.91px;top:444.88px;font-size:14.6px;line-height:14.6px;color:#606060;font-family:'Liberation Sans', sans-serif;transform:scaleX(1.0808);transform-origin:0 0;">8</div>
<div class="t" style="left:283.25px;top:445.94px;font-size:13px;line-height:13px;color:#252423;font-family:'Liberation Sans', sans-serif;font-style:italic;transform:scaleX(1.1138);transform-origin:0 0;">8</div>
<div class="t" style="left:426.80px;top:445.94px;font-size:13px;line-height:13px;color:#252423;font-family:'Liberation Sans', sans-serif;font-style:italic;transform:scaleX(1.1136);transform-origin:0 0;">3/19/2020</div>
<div class="t" style="left:682.55px;top:445.94px;font-size:13px;line-height:13px;color:#252423;font-family:'Liberation Sans', sans-serif;font-style:italic;transform:scaleX(1.1138);transform-origin:0 0;">3</div>
<div class="t" style="left:699.80px;top:445.77px;font-size:13.2px;line-height:13.2px;color:#252423;font-family:'Liberation Sans', sans-serif;transform:scaleX(0.9848);transform-origin:0 0;">John Davis</div>
<div class="t" style="left:1082.45px;top:445.94px;font-size:13px;line-height:13px;color:#252423;font-family:'Liberation Sans', sans-serif;font-style:italic;transform:scaleX(1.1138);transform-origin:0 0;">6</div>
<div class="t" style="left:1098.50px;top:445.72px;font-size:13.25px;line-height:13.25px;color:#252423;font-family:'Liberation Sans', sans-serif;transform:scaleX(1.0346);transform-origin:0 0;">Contract Clock, 14", Brown</div>
<div class="t" style="left:73.91px;top:471.10px;font-size:14.6px;line-height:14.6px;color:#606060;font-family:'Liberation Sans', sans-serif;transform:scaleX(1.0808);transform-origin:0 0;">9</div>
<div class="t" style="left:283.25px;top:472.16px;font-size:13px;line-height:13px;color:#252423;font-family:'Liberation Sans', sans-serif;font-style:italic;transform:scaleX(1.1138);transform-origin:0 0;">9</div>
<div class="t" style="left:434.85px;top:472.16px;font-size:13px;line-height:13px;color:#252423;font-family:'Liberation Sans', sans-serif;font-style:italic;transform:scaleX(1.1136);transform-origin:0 0;">4/7/2020</div>
<div class="t" style="left:682.55px;top:472.16px;font-size:13px;line-height:13px;color:#252423;font-family:'Liberation Sans', sans-serif;font-style:italic;transform:scaleX(1.1138);transform-origin:0 0;">5</div>
<div class="t" style="left:699.80px;top:471.99px;font-size:13.2px;line-height:13.2px;color:#252423;font-family:'Liberation Sans', sans-serif;transform:scaleX(1.0229);transform-origin:0 0;">Linda Smith</div>
<div class="t" style="left:1082.45px;top:472.16px;font-size:13px;line-height:13px;color:#252423;font-family:'Liberation Sans', sans-serif;font-style:italic;transform:scaleX(1.1138);transform-origin:0 0;">7</div>
<div class="t" style="left:1098.50px;top:471.94px;font-size:13.25px;line-height:13.25px;color:#252423;font-family:'Liberation Sans', sans-serif;transform:scaleX(1.0262);transform-origin:0 0;">Dana Halogen Swing-Arm Architect Lamp</div>
<div class="t" style="left:69.53px;top:497.32px;font-size:14.6px;line-height:14.6px;color:#606060;font-family:'Liberation Sans', sans-serif;transform:scaleX(1.0808);transform-origin:0 0;">10</div>
<div class="t" style="left:275.20px;top:498.38px;font-size:13px;line-height:13px;color:#252423;font-family:'Liberation Sans', sans-serif;font-style:italic;transform:scaleX(1.1138);transform-origin:0 0;">10</div>
<div class="t" style="left:426.80px;top:498.38px;font-size:13px;line-height:13px;color:#252423;font-family:'Liberation Sans', sans-serif;font-style:italic;transform:scaleX(1.1136);transform-origin:0 0;">4/12/2020</div>
<div class="t" style="left:682.55px;top:498.38px;font-size:13px;line-height:13px;color:#252423;font-family:'Liberation Sans', sans-serif;font-style:italic;transform:scaleX(1.1138);transform-origin:0 0;">2</div>
<div class="t" style="left:699.80px;top:498.21px;font-size:13.2px;line-height:13.2px;color:#252423;font-family:'Liberation Sans', sans-serif;transform:scaleX(1.0232);transform-origin:0 0;">Mary Resnor</div>
<div class="t" style="left:1082.45px;top:498.38px;font-size:13px;line-height:13px;color:#252423;font-family:'Liberation Sans', sans-serif;font-style:italic;transform:scaleX(1.1138);transform-origin:0 0;">6</div>
<div class="t" style="left:1098.50px;top:498.16px;font-size:13.25px;line-height:13.25px;color:#252423;font-family:'Liberation Sans', sans-serif;transform:scaleX(1.0346);transform-origin:0 0;">Contract Clock, 14", Brown</div>
<div class="t" style="left:1433.00px;top:185.49px;font-size:16.9px;line-height:16.9px;color:#505050;font-family:'Liberation Sans', sans-serif;transform:scaleX(0.9483);transform-origin:0 0;">Query Settings</div>
<svg class="r" style="left:1430px;top:229px;" width="9" height="8" viewBox="0 0 9 8"><path d="M8 0.5 V7.5 H1 Z" fill="#444"/></svg>
<div class="t" style="left:1448.00px;top:227.33px;font-size:15.2px;line-height:15.2px;color:#252423;font-family:'Liberation Sans', sans-serif;font-weight:700;transform:scaleX(0.8777);transform-origin:0 0;">PROPERTIES</div>
<div class="t" style="left:1448.00px;top:253.65px;font-size:14px;line-height:14px;color:#252423;font-family:'Liberation Sans', sans-serif;transform:scaleX(0.9640);transform-origin:0 0;">Name</div>
<div class="r" style="left:1447px;top:271px;width:170px;height:27px;background:#ffffff;box-sizing:border-box;border:1px solid #b8b8b8;"></div>
<div class="t" style="left:1455.00px;top:279.15px;font-size:14px;line-height:14px;color:#252423;font-family:'Liberation Sans', sans-serif;transform:scaleX(0.9015);transform-origin:0 0;">Sheet1</div>
<div class="t" style="left:1448.00px;top:311.53px;font-size:14.5px;line-height:14.5px;color:#1e6fc8;font-family:'Liberation Sans', sans-serif;transform:scaleX(1.0090);transform-origin:0 0;">All Properties</div>
<svg class="r" style="left:1430px;top:355px;" width="9" height="8" viewBox="0 0 9 8"><path d="M8 0.5 V7.5 H1 Z" fill="#444"/></svg>
<div class="t" style="left:1448.00px;top:353.43px;font-size:15.2px;line-height:15.2px;color:#252423;font-family:'Liberation Sans', sans-serif;font-weight:700;transform:scaleX(0.8838);transform-origin:0 0;">APPLIED STEPS</div>
<div class="r" style="left:1447px;top:377px;width:170px;height:240px;background:#f3f2f1;box-sizing:border-box;border:1px solid #cfcfcf;"></div>
<div class="t" style="left:1476.40px;top:385.15px;font-size:14px;line-height:14px;color:#252423;font-family:'Liberation Sans', sans-serif;transform:scaleX(1.0822);transform-origin:0 0;">Source</div>
<div class="t" style="left:1476.40px;top:410.15px;font-size:14px;line-height:14px;color:#252423;font-family:'Liberation Sans', sans-serif;transform:scaleX(1.0809);transform-origin:0 0;">Navigation</div>
<div class="t" style="left:1476.40px;top:435.15px;font-size:14px;line-height:14px;color:#252423;font-family:'Liberation Sans', sans-serif;transform:scaleX(1.0554);transform-origin:0 0;">Promoted Headers</div>
<div class="r" style="left:1448px;top:453px;width:162px;height:25px;background:#d2d2d2;"></div>
<div class="r" style="left:1448px;top:453px;width:3px;height:25px;background:#f2c811;"></div>
<svg class="r" style="left:1456px;top:459px;" width="16" height="14" viewBox="0 0 16 14"><path d="M2.5 2 L13 12.5 M13 2 L2.5 12.5" stroke="#6a6a6a" stroke-width="1.5"/></svg>
<div class="t" style="left:1476.40px;top:460.15px;font-size:14px;line-height:14px;color:#252423;font-family:'Liberation Sans', sans-serif;transform:scaleX(1.0462);transform-origin:0 0;">Changed Type</div>
<svg class="r" style="left:64px;top:242px;filter:drop-shadow(0px 3px 2.5px rgba(0,0,0,0.45));overflow:visible" width="65" height="83" viewBox="0 0 65 83"><path d="M40.70 12.00 Q47.51 26.02 51.56 44.58 A20.3 20.3 0 1 1 17.39 37.22 Q28.72 21.97 40.70 12.00 Z" fill="#fb4343" transform="translate(-0.50 0.00)"/></svg>
<div class="t" style="left:90.48px;top:279.78px;font-size:22px;line-height:22px;color:#ffffff;font-family:'Liberation Sans', sans-serif;">1</div>
<svg class="r" style="left:153px;top:242px;filter:drop-shadow(0px 3px 2.5px rgba(0,0,0,0.45));overflow:visible" width="64" height="82" viewBox="0 0 64 82"><path d="M15.00 12.00 Q29.28 19.89 44.09 33.17 A20.2 20.2 0 1 1 12.07 47.85 Q11.67 27.97 15.00 12.00 Z" fill="#fb4343" transform="translate(0.00 0.00)"/></svg>
<div class="t" style="left:177.68px;top:278.68px;font-size:22px;line-height:22px;color:#ffffff;font-family:'Liberation Sans', sans-serif;">2</div>
<svg class="r" style="left:793px;top:69px;filter:drop-shadow(0px 3px 2.5px rgba(0,0,0,0.45));overflow:visible" width="84" height="64" viewBox="0 0 84 64"><path d="M72.50 31.50 Q59.82 41.22 42.09 49.27 A20.0 20.0 0 1 1 41.66 14.49 Q59.59 22.09 72.50 31.50 Z" fill="#fb4343" transform="translate(-0.20 0.20)"/></svg>
<div class="t" style="left:822.28px;top:90.88px;font-size:22px;line-height:22px;color:#ffffff;font-family:'Liberation Sans', sans-serif;">3</div>
<svg class="r" style="left:1506px;top:250px;filter:drop-shadow(0px 3px 2.5px rgba(0,0,0,0.45));overflow:visible" width="86" height="64" viewBox="0 0 86 64"><path d="M12.00 31.60 Q25.70 22.05 44.54 14.35 A20.2 20.2 0 1 1 44.03 49.77 Q25.42 41.53 12.00 31.60 Z" fill="#fb4343" transform="translate(0.50 -0.20)"/></svg>
<div class="t" style="left:1548.58px;top:271.48px;font-size:22px;line-height:22px;color:#ffffff;font-family:'Liberation Sans', sans-serif;">4</div>
</body></html>
